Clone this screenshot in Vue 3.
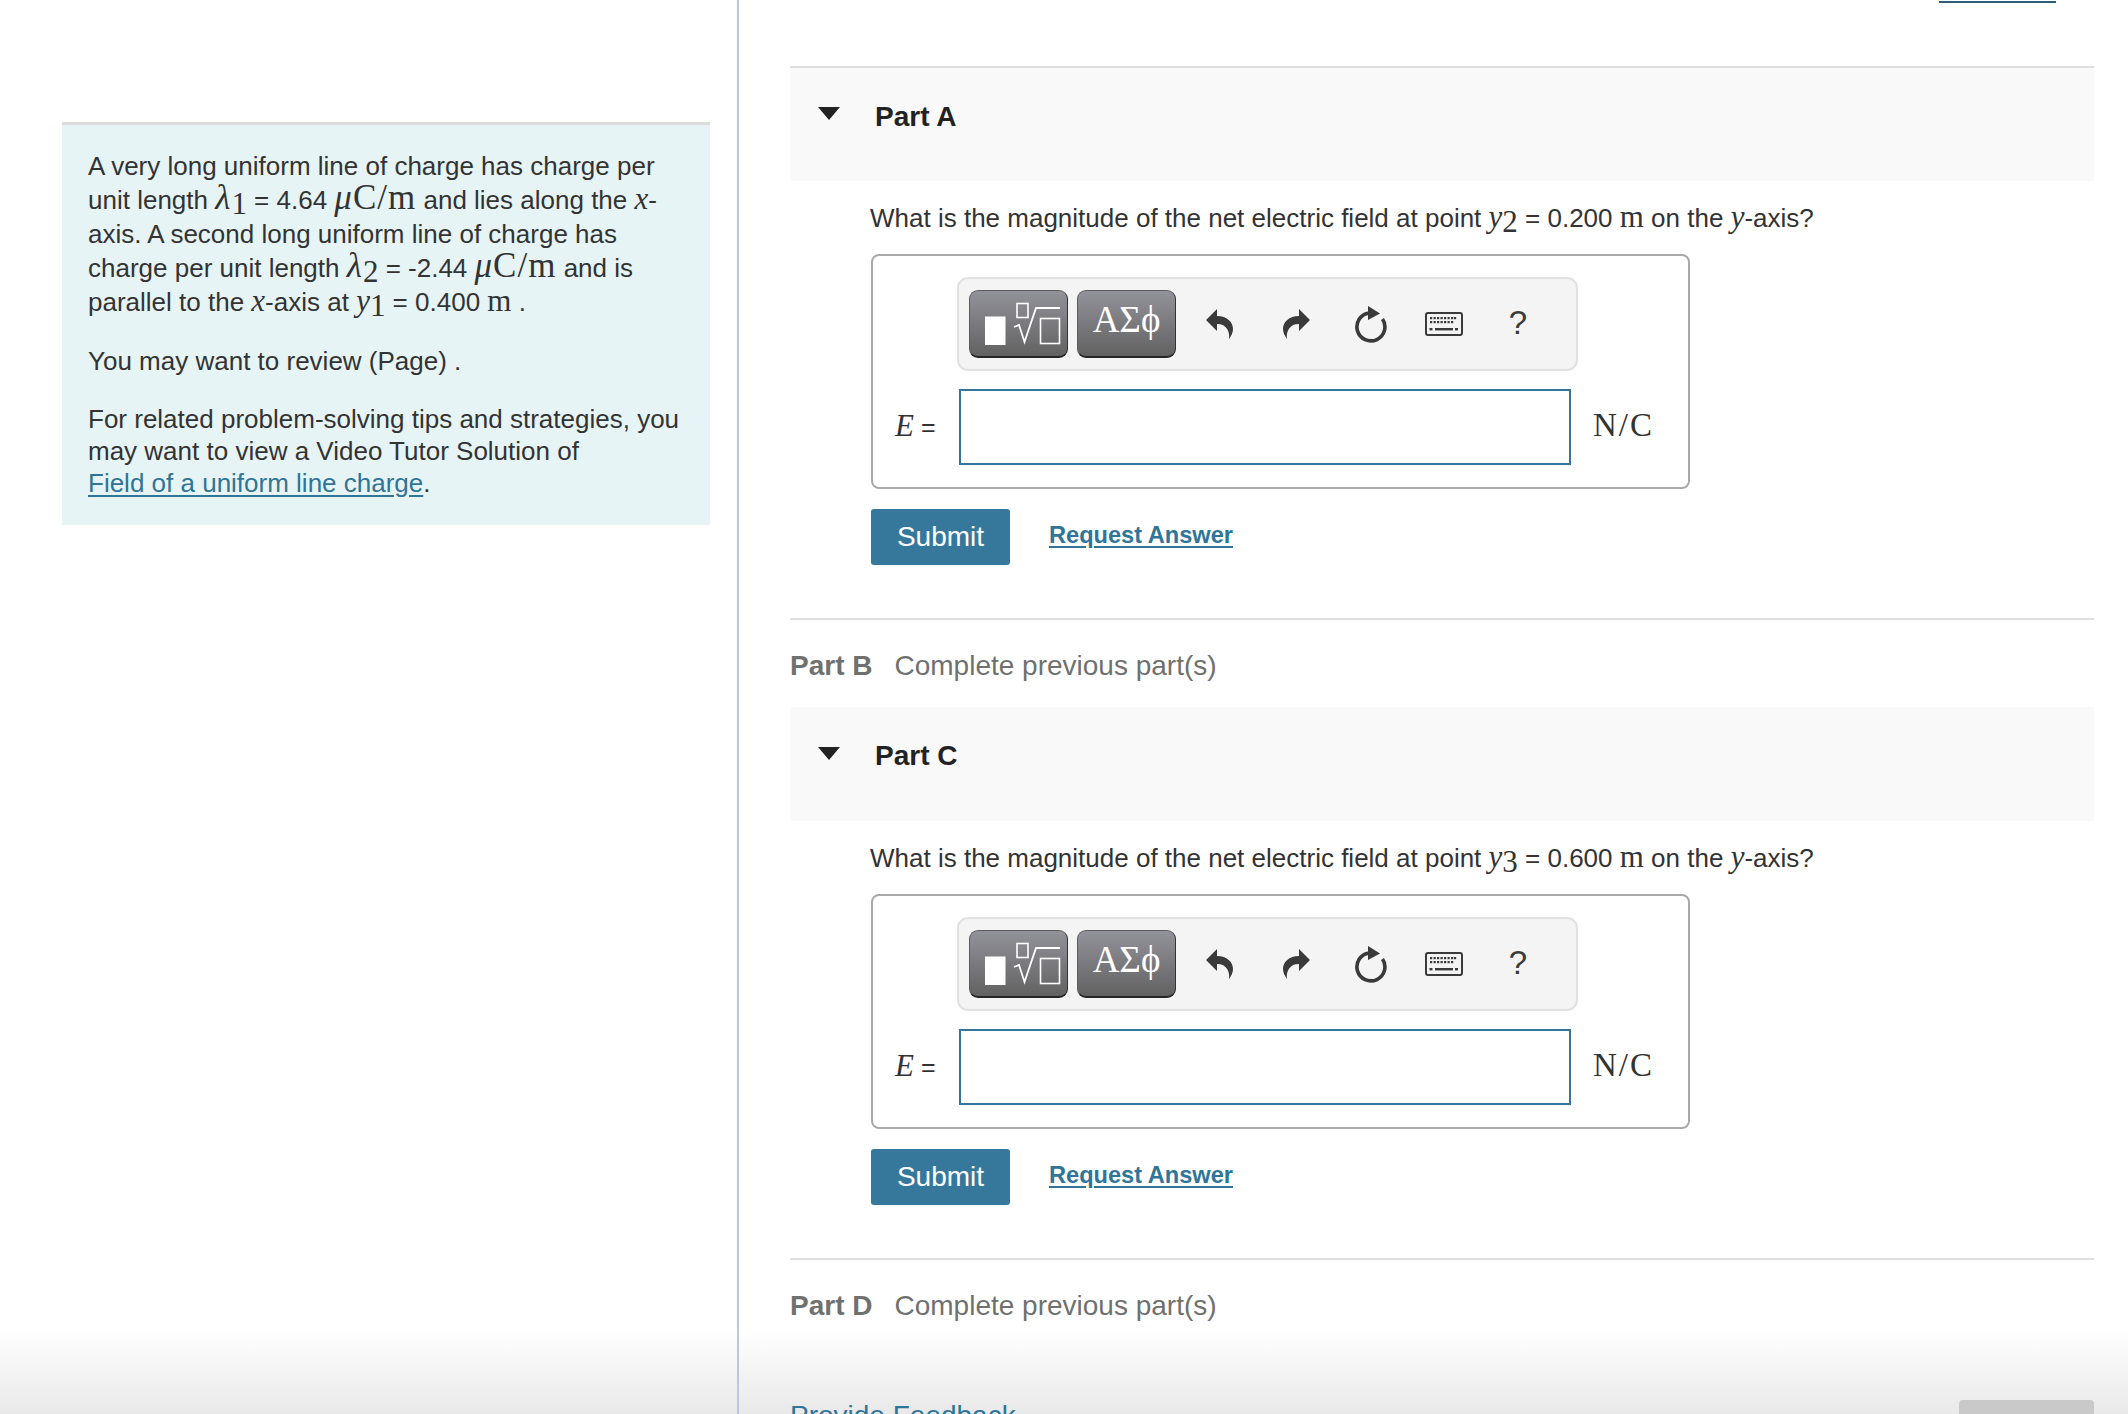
<script setup>
const parts = [
  { id: 'A', open: true, sub: '2', val: '0.200' },
  { id: 'B', open: false },
  { id: 'C', open: true, sub: '3', val: '0.600' },
  { id: 'D', open: false },
]
const keyRows = [
  { y: 7, xs: [6, 9.5, 13, 16.5, 20, 23.5, 27, 30] },
  { y: 11, xs: [6, 9.5, 13, 16.5, 20, 23.5, 27] },
]
</script>

<template>
  <div class="page">
    <div class="fade"></div>
    <aside class="left">
      <div class="intro">
        <p class="tall">A very long uniform line of charge has charge per<br>unit length <span class="m i big">λ</span><sub class="m">1</sub> = 4.64 <span class="m big"><i>μ</i>C/m</span> and lies along the <span class="m i">x</span>-<br>axis. A second long uniform line of charge has<br>charge per unit length <span class="m i big">λ</span><sub class="m">2</sub> = -2.44 <span class="m big"><i>μ</i>C/m</span> and is<br>parallel to the <span class="m i">x</span>-axis at <span class="m i">y</span><sub class="m">1</sub> = 0.400 <span class="m">m</span> .</p>
        <p>You may want to review (Page) .</p>
        <p>For related problem-solving tips and strategies, you<br>may want to view a Video Tutor Solution of<br><a class="link">Field of a uniform line charge</a>.</p>
      </div>
    </aside>
    <main class="right">
      <span class="top-line"></span>
      <template v-for="p in parts" :key="p.id">
        <section v-if="p.open" class="part" :class="{ first: p.id === 'A' }">
          <header class="head">
            <svg class="caret" width="22" height="13" viewBox="0 0 22 13"><path d="M0 0H22L11 13Z" fill="#222" /></svg>
            <h2>Part {{ p.id }}</h2>
          </header>
          <p class="question">What is the magnitude of the net electric field at point <span class="m i">y</span><sub class="m">{{ p.sub }}</sub> = {{ p.val }} <span class="m">m</span> on the <span class="m i">y</span>-axis?</p>
          <div class="answer">
            <div class="toolbar">
              <button class="tool">
                <svg width="96" height="65" viewBox="0 0 96 65">
                  <rect x="15" y="25.5" width="20.5" height="28.5" fill="#fff" />
                  <rect x="47" y="12.5" width="11" height="14" fill="none" stroke="#fff" stroke-width="1.6" />
                  <path d="M44 36L49 34L54.500 51L66 17H90" fill="none" stroke="#fff" stroke-width="1.8" />
                  <rect x="70.500" y="27.500" width="19" height="25" fill="none" stroke="#fff" stroke-width="1.6" />
                </svg>
              </button>
              <button class="tool greek">ΑΣϕ</button>
              <span class="slot undo">
                <svg width="27" height="30" viewBox="0 0 27 30"><path d="M0 11L11 0V7C21 7 27 13 27 20C27 24 25 27 23 30C24 23 21 15 11 15V22Z" fill="#3a3a3a" /></svg>
              </span>
              <span class="slot">
                <svg width="27" height="30" viewBox="0 0 27 30"><path d="M27 11L16 0V7C6 7 0 13 0 20C0 24 2 27 4 30C3 23 6 15 16 15V22Z" fill="#3a3a3a" /></svg>
              </span>
              <span class="slot">
                <svg width="33" height="37" viewBox="0 0 33 37">
                  <path d="M15 7A14 14 0 1 0 28.500 13" fill="none" stroke="#3a3a3a" stroke-width="3.6" />
                  <path d="M14 0L26 7.500L14 14Z" fill="#3a3a3a" />
                </svg>
              </span>
              <span class="slot">
                <svg width="38" height="24" viewBox="0 0 38 24">
                  <rect x="1" y="1" width="36" height="22" rx="2" fill="#f4f4f4" stroke="#3a3a3a" stroke-width="2" />
                  <template v-for="r in keyRows" :key="r.y">
                    <rect v-for="x in r.xs" :key="x" :x="x - 1" :y="r.y - 2" width="2.200" height="2.200" fill="#3a3a3a" />
                  </template>
                  <rect x="4.500" y="16" width="3" height="2.400" fill="#3a3a3a" />
                  <rect x="10" y="16" width="18" height="2.400" fill="#3a3a3a" />
                  <rect x="30" y="16" width="3" height="2.400" fill="#3a3a3a" />
                </svg>
              </span>
              <span class="slot help">?</span>
            </div>
            <div class="entry">
              <span class="label"><span class="m i">E</span> =</span>
              <input class="field" type="text" aria-label="E" />
              <span class="unit m">N/C</span>
            </div>
          </div>
          <div class="actions">
            <button class="submit">Submit</button>
            <a class="request">Request Answer</a>
          </div>
        </section>
        <section v-else class="locked">
          <strong>Part {{ p.id }}</strong>
          <span>Complete previous part(s)</span>
        </section>
      </template>
      <footer class="foot">
        <a class="feedback">Provide Feedback</a>
        <button class="next"></button>
      </footer>
    </main>
  </div>
</template>

<style>
html, body { margin: 0; background: #fff; }
</style>

<style scoped>
.page {
  position: relative;
  display: flex;
  width: 2128px;
  height: 1414px;
  overflow: hidden;
  background: #fff;
  color: #333;
  font-family: "Liberation Sans", Arial, sans-serif;
  font-size: 26px;
  line-height: 32px;
}
.left {
  position: relative;
  flex: none;
  box-sizing: border-box;
  width: 739px;
  padding: 122px 27px 0 62px;
  border-right: 2px solid #b9c9dd;
}
.intro {
  box-sizing: border-box;
  height: 403px;
  padding: 24px 26px 0;
  background: #e7f4f6;
  border-top: 3px solid #dcdcdc;
}
.intro p { margin: 0 0 26px; white-space: nowrap; }
.intro .tall { line-height: 34px; }
.link { color: #2f7597; text-decoration: underline; text-underline-offset: 3px; }
.m { font-family: "Liberation Serif", "Times New Roman", serif; font-size: 31px; line-height: 0; }
.i { font-style: italic; }
.big { font-size: 35px; letter-spacing: 1px; }
sub { font-size: 18px; line-height: 0; vertical-align: -5px; }
.right {
  position: relative;
  flex: 1;
  min-width: 0;
  padding: 66px 34px 0 51px;
}
.top-line {
  position: absolute;
  top: 1px;
  left: 1200px;
  width: 117px;
  height: 2px;
  background: #2a5f78;
}
.part { height: 551px; }
.first { height: 552px; }
.head {
  box-sizing: border-box;
  display: flex;
  align-items: center;
  height: 114px;
  padding: 0 0 16px 28px;
  background: #f9f9f9;
}
.first .head { height: 115px; border-top: 2px solid #dfdfdf; }
.caret { flex: none; margin-top: -6px; }
.head h2 { margin: 0 0 0 35px; font-size: 28px; line-height: 32px; font-weight: 700; color: #222; }
.question { margin: 21px 0 20px 80px; height: 32px; white-space: nowrap; }
.answer {
  box-sizing: border-box;
  width: 819px;
  height: 235px;
  margin-left: 81px;
  padding: 21px 0 0 84px;
  border: 2px solid #a9a9a9;
  border-radius: 8px;
}
.toolbar {
  box-sizing: border-box;
  display: flex;
  align-items: center;
  width: 621px;
  height: 94px;
  padding: 0 0 0 10px;
  background: #f4f4f4;
  border: 2px solid #e1e1e1;
  border-radius: 11px;
}
.tool {
  flex: none;
  box-sizing: border-box;
  width: 99px;
  height: 68px;
  margin-right: 9px;
  padding: 0;
  background: linear-gradient(#92929a, #626262);
  border: 1.500px solid #5c5c5c;
  border-bottom: 2.500px solid #262626;
  border-right-color: #333;
  border-radius: 9px;
  color: #fff;
}
.tool svg { display: block; }
.greek {
  font-family: "Liberation Serif", "Times New Roman", serif;
  font-size: 37px;
  line-height: 52px;
  padding-bottom: 8px;
}
.slot {
  display: flex;
  flex: none;
  align-items: center;
  justify-content: center;
  width: 74px;
  height: 68px;
}
.undo { margin: 0 3px 0 -3px; }
.help { color: #3a3a3a; font-size: 33px; margin-top: -3px; }
.entry { display: flex; align-items: center; margin: 18px 0 0 -62px; }
.label { width: 64px; font-size: 25px; white-space: nowrap; }
.field {
  box-sizing: border-box;
  flex: none;
  width: 612px;
  height: 76px;
  padding: 0;
  background: #fff;
  border: 2px solid #35779a;
  border-radius: 0;
  outline: none;
}
.unit { margin-left: 22px; font-size: 33px; letter-spacing: 2px; line-height: 40px; margin-top: -4px; }
.actions { display: flex; align-items: center; margin: 20px 0 0 81px; }
.submit {
  width: 139px;
  height: 56px;
  padding: 0;
  background: #36789b;
  border: 0;
  border-radius: 3px;
  color: #fff;
  font: 28px/32px "Liberation Sans", Arial, sans-serif;
}
.request {
  margin: -4px 0 0 39px;
  color: #2f7597;
  font-size: 23.600px;
  font-weight: 700;
  text-decoration: underline;
  text-underline-offset: 3px;
}
.locked {
  box-sizing: border-box;
  display: flex;
  height: 89px;
  padding-top: 30px;
  border-top: 2px solid #dfdfdf;
  color: #6f7170;
  font-size: 28px;
}
.locked strong { margin-right: 22px; }
.foot {
  display: flex;
  justify-content: space-between;
  margin-top: 53px;
}
.feedback {
  margin-top: 0;
  color: #2f7597;
  font-size: 28px;
  text-decoration: none;
}
.next {
  width: 135px;
  height: 40px;
  padding: 0;
  background: #c9c9c9;
  border: 0;
  border-radius: 4px 4px 0 0;
}
.fade {
  position: absolute;
  left: 0;
  right: 0;
  bottom: 0;
  height: 84px;
  background: linear-gradient(rgba(225, 225, 225, 0), rgba(225, 225, 225, 0.75));
  pointer-events: none;
}
</style>
